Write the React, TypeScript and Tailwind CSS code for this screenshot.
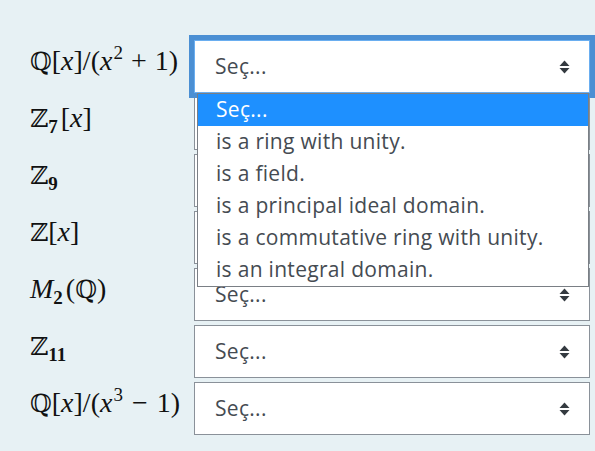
import React from 'react';

const serif = { fontFamily: '"Liberation Serif", "DejaVu Serif", serif' };

function Bb({ c }: { c: string }) {
  return (
    <span className="font-normal not-italic" style={{ fontFamily: '"DejaVu Serif", serif', fontSize: '25px' }}>
      {c}
    </span>
  );
}

function X({ c = 'x' }: { c?: string }) {
  return <span className="italic">{c}</span>;
}

function Sub({ c }: { c: string }) {
  return <span className="relative top-[6px] text-[19px] font-semibold">{c}</span>;
}

function Sup({ c }: { c: string }) {
  return <span className="relative -top-[11px] text-[19px] ml-[1px]">{c}</span>;
}

function Arrows() {
  return (
    <svg width="11" height="14" viewBox="0 0 11 14" className="shrink-0">
      <path d="M5.5 0.5 L10.5 6 L0.5 6 Z" fill="#343a40" />
      <path d="M0.5 8 L10.5 8 L5.5 13.5 Z" fill="#343a40" />
    </svg>
  );
}

const OPTIONS = [
  'Seç...',
  'is a ring with unity.',
  'is a field.',
  'is a principal ideal domain.',
  'is a commutative ring with unity.',
  'is an integral domain.',
];

const ROWS: React.ReactNode[] = [
  <>
    <Bb c="ℚ" />[<X />]/(<X />
    <Sup c="2" />
    <span className="mx-[8px]">+</span>1)
  </>,
  <>
    <Bb c="ℤ" />
    <Sub c="7" />
    <span className="ml-[3px]">[</span>
    <X />]
  </>,
  <>
    <Bb c="ℤ" />
    <Sub c="9" />
  </>,
  <>
    <Bb c="ℤ" />[<X />]
  </>,
  <>
    <X c="M" />
    <Sub c="2" />
    <span className="ml-[3px]">(</span>
    <Bb c="ℚ" />)
  </>,
  <>
    <Bb c="ℤ" />
    <Sub c="11" />
  </>,
  <>
    <Bb c="ℚ" />[<X />]/(<X />
    <Sup c="3" />
    <span className="mx-[9px]">−</span>1)
  </>,
];

function Select({ open }: { open?: boolean }) {
  return (
    <div
      className={
        'relative h-[53px] w-[396px] bg-white border flex items-center pl-[20px] pr-[19px] ' +
        (open ? 'border-[#6aaef0] shadow-[0_0_0_5px_#4b8fd3] z-10' : 'border-[#8a9199]')
      }
    >
      <span className="flex-1 text-[21px] tracking-[0.3px] text-[#454b52]">Seç...</span>
      <Arrows />
      {open && (
        <div className="absolute top-[52px] left-[2px] right-0 bg-white border border-[#7a7f85] z-20">
          {OPTIONS.map((o, i) => (
            <div
              key={o}
              className={
                'h-[32px] flex items-center pl-[18px] text-[21px] tracking-[0.3px] ' +
                (i === 0 ? 'bg-[#1e90ff] text-white' : 'text-[#454b52]')
              }
            >
              {o}
            </div>
          ))}
        </div>
      )}
    </div>
  );
}

export default function App() {
  return (
    <div
      className="w-[595px] h-[451px] bg-[#e7f1f4] pt-[40px] pl-[30px]"
      style={{ fontFamily: '"Open Sans", "Noto Sans", sans-serif' }}
    >
      <div className="flex flex-col gap-[4px]">
        {ROWS.map((label, i) => (
          <div key={i} className="flex">
            <div className="w-[164px] h-[42px] flex items-center text-[28px] leading-none text-[#111]" style={serif}>
              <span className="whitespace-nowrap">{label}</span>
            </div>
            <Select open={i === 0} />
          </div>
        ))}
      </div>
    </div>
  );
}
